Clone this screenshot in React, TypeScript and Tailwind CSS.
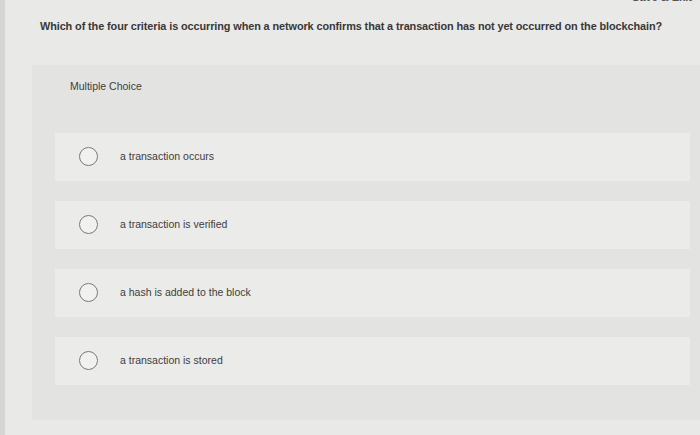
const options = [
  "a transaction occurs",
  "a transaction is verified",
  "a hash is added to the block",
  "a transaction is stored",
];

function OptionRow({ label }: { label: string }) {
  return (
    <div className="h-[48px] flex items-center bg-[#ebebe9]">
      <span className="ml-[24px] w-[19px] h-[19px] rounded-full border-[1.5px] border-[#7a7a7a] bg-[#f1f1ef]" />
      <span className="ml-[22px] text-[10.5px] text-[#3d3d3d]">{label}</span>
    </div>
  );
}

export default function App() {
  return (
    <div
      className="w-[700px] h-[435px] overflow-hidden bg-[#e9e9e7] flex flex-col border-l-[5px] border-[#d6d6d4]"
      style={{ fontFamily: '"Liberation Sans", Arial, sans-serif' }}
    >
      <div className="h-[4px] overflow-hidden flex justify-end pr-[8px]">
        <span className="text-[11px] font-bold text-[#555] leading-none -mt-[8px]">Save &amp; Exit</span>
      </div>
      <p className="mt-[14px] ml-[35px] whitespace-nowrap text-[10.9px] font-bold text-[#383838] leading-[16px] tracking-[-0.1px]">
        Which of the four criteria is occurring when a network confirms that a transaction has not yet occurred on the blockchain?
      </p>
      <div className="mt-[31px] ml-[27px] flex-1 mb-[15px] bg-[#e3e3e1] flex flex-col">
        <div className="mt-[14px] ml-[38px] text-[10.5px] text-[#3d3d3d]">Multiple Choice</div>
        <div className="mt-[38px] ml-[23px] mr-[10px] flex flex-col gap-[20px]">
          {options.map((o) => (
            <OptionRow key={o} label={o} />
          ))}
        </div>
      </div>
    </div>
  );
}
